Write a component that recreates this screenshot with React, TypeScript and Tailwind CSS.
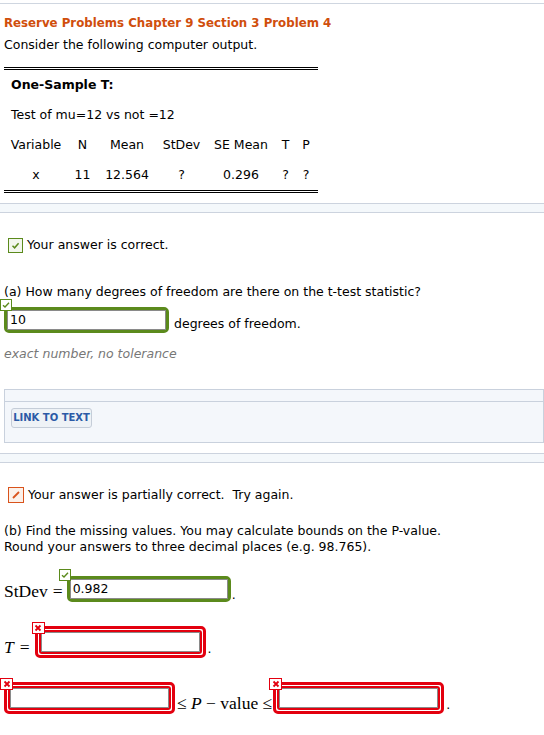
import React from 'react';

const green = '#5b8a1c';
const red = '#e3000f';
const serif = { fontFamily: '"Liberation Serif", "Times New Roman", serif' };

function TinyCheck({ className }: { className?: string }) {
  return (
    <span className={`absolute flex h-[12px] w-[12px] items-center justify-center border border-[#5b8a1c] bg-white ${className ?? ''}`}>
      <svg width="8" height="8" viewBox="0 0 8 8" fill="none">
        <path d="M1 4.2 L3 6 L7 1.8" stroke={green} strokeWidth="1.4" />
      </svg>
    </span>
  );
}

function TinyCross({ className }: { className?: string }) {
  return (
    <span className={`absolute z-10 flex h-[12px] w-[13px] items-center justify-center border border-[#e3000f] bg-white ${className ?? ''}`}>
      <svg width="8" height="8" viewBox="0 0 8 8" fill="none">
        <path d="M1.5 1.5 L6.5 6.5 M6.5 1.5 L1.5 6.5" stroke={red} strokeWidth="1.8" />
      </svg>
    </span>
  );
}

function GreenInput({ value, width }: { value: string; width: string }) {
  return (
    <div className={`${width} h-[26px] rounded-[5px] border-[3px] border-[#5b8a1c] bg-white`}>
      <div className="h-full w-full border border-[#8a8a8a] pl-[2px] leading-[17px]">{value}</div>
    </div>
  );
}

function RedInput() {
  return (
    <div className="h-[32px] w-[171px] rounded-[5px] border-[3px] border-[#e3000f] bg-white p-px">
      <div className="h-full w-full rounded-[3px] border-2 border-[#e3000f]">
        <div className="h-full w-full border border-[#8a8a8a] bg-white" />
      </div>
    </div>
  );
}

function Band() {
  return <div className="h-[10px] border-y border-[#ccd3de] bg-[#f4f8fb]" />;
}

const cols = ['w-[62px]', 'w-[31px]', 'w-[58px]', 'w-[51px]', 'w-[68px]', 'w-[21px]', 'w-[20px]'];
const header = ['Variable', 'N', 'Mean', 'StDev', 'SE Mean', 'T', 'P'];
const data = ['x', '11', '12.564', '?', '0.296', '?', '?'];

export default function App() {
  return (
    <div className="min-h-[735px] bg-white text-[12.5px] leading-4 text-black" style={{ fontFamily: '"DejaVu Sans", Verdana, sans-serif' }}>
      <div className="pt-[3px]">
        <div className="h-px bg-[#cfd6e0]" />
      </div>

      <div className="px-[4px]">
        <h1 className="mt-[11px] text-[11.8px] font-bold text-[#d04e0c]">Reserve Problems Chapter 9 Section 3 Problem 4</h1>
        <p className="mt-[6px]">Consider the following computer output.</p>

        <div className="mt-[14px] w-[314px] border-y-[3px] border-double border-black">
          <div className="flex h-[30px] items-center pl-[7px] font-bold">One-Sample T:</div>
          <div className="flex h-[30px] items-center pl-[7px]">Test of mu=12 vs not =12</div>
          <div className="flex h-[30px] items-center pl-px">
            {header.map((h, i) => (
              <span key={h} className={`${cols[i]} text-center`}>{h}</span>
            ))}
          </div>
          <div className="flex h-[30px] items-center pl-px">
            {data.map((d, i) => (
              <span key={i} className={`${cols[i]} text-center`}>{d}</span>
            ))}
          </div>
        </div>
      </div>

      <div className="mt-[10px]">
        <Band />
      </div>

      <div className="px-[4px]">
        <div className="mt-[24px] flex h-[16px] items-center">
          <span className="ml-[4px] mr-[4px] flex h-[15px] w-[15px] items-center justify-center border border-[#5b8a1c] bg-[#f3f7ee]">
            <svg width="9" height="9" viewBox="0 0 9 9" fill="none">
              <path d="M1.5 4.8 L3.6 6.8 L7.6 2.2" stroke={green} strokeWidth="1.5" />
            </svg>
          </span>
          <span>Your answer is correct.</span>
        </div>

        <p className="mt-[31px]">(a) How many degrees of freedom are there on the t-test statistic?</p>

        <div className="mt-[7px] flex items-end">
          <div className="relative">
            <TinyCheck className="-left-[4px] -top-[8px]" />
            <GreenInput value="10" width="w-[165px]" />
          </div>
          <span className="ml-[5px] mb-[1px]">degrees of freedom.</span>
        </div>

        <p className="mt-[13px] italic text-[#777]">exact number, no tolerance</p>

        <div className="mt-[27px] -mr-[4px] border border-[#c9d1dd] bg-[#f4f7fb]">
          <div className="h-[12px] border-b border-[#c9d1dd]" />
          <div className="px-[6px] pb-[14px] pt-[6px]">
            <button className="flex h-[20px] w-[81px] items-center justify-center rounded-[3px] border border-[#c5cdd8] bg-[#eef2f6] text-[10px] font-bold text-[#2b5aa6]">
              LINK TO TEXT
            </button>
          </div>
        </div>
      </div>

      <div className="mt-[10px]">
        <Band />
      </div>

      <div className="px-[4px]">
        <div className="mt-[24px] flex h-[16px] items-center">
          <span className="ml-[4px] mr-[4px] flex h-[16px] w-[16px] items-center justify-center border border-[#d9531c] bg-[#fbf1ea]">
            <svg width="10" height="10" viewBox="0 0 10 10" fill="none">
              <path d="M2 8 L8 2" stroke="#d9531c" strokeWidth="1.8" />
            </svg>
          </span>
          <span className="whitespace-pre">Your answer is partially correct.  Try again.</span>
        </div>

        <p className="mt-[20px]">(b) Find the missing values. You may calculate bounds on the P-value.</p>
        <p>Round your answers to three decimal places (e.g. 98.765).</p>

        <div className="mt-[21px] flex items-end">
          <span className="mb-[1px] text-[17.5px] leading-5" style={serif}>
            StDev<span className="ml-[5px]">=</span>
          </span>
          <div className="relative ml-[4px]">
            <TinyCheck className="-left-[8px] -top-[7px]" />
            <GreenInput value="0.982" width="w-[164px]" />
          </div>
          <span className="mb-[1px] ml-px leading-3">.</span>
        </div>

        <div className="mt-[24px] flex items-end">
          <span className="mb-[1px] text-[17.5px] leading-5" style={serif}>
            <i>T</i>
            <span className="ml-[6px]">=</span>
          </span>
          <div className="relative ml-[5px]">
            <TinyCross className="-left-[3px] -top-[4px]" />
            <RedInput />
          </div>
          <span className="mb-[3px] ml-[2px] leading-3">.</span>
        </div>

        <div className="mt-[24px] flex items-end">
          <div className="relative">
            <TinyCross className="-left-[4px] -top-[4px]" />
            <RedInput />
          </div>
          <span className="mb-[1px] ml-[2px] text-[17.5px] leading-5" style={serif}>
            ≤ <i>P</i> − value ≤
          </span>
          <div className="relative ml-px">
            <TinyCross className="-left-[4px] -top-[4px]" />
            <RedInput />
          </div>
          <span className="mb-[3px] ml-[2px] leading-3">.</span>
        </div>
      </div>
    </div>
  );
}
